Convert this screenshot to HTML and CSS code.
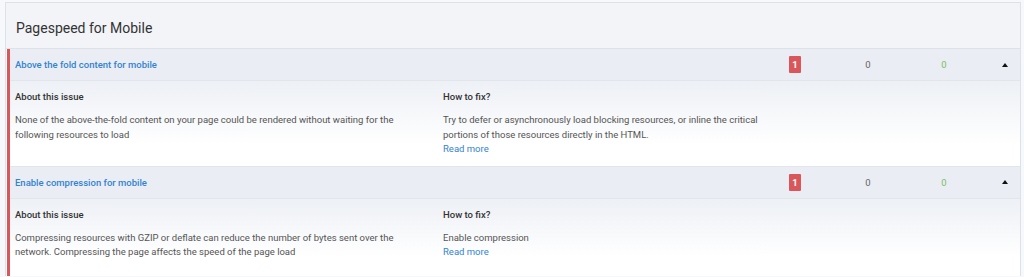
FILE: index.html
```html
<!DOCTYPE html>
<html lang="en">
    <head>
        <meta charset="UTF-8" />
        <meta name="viewport" content="width=device-width, initial-scale=1.0" />
        <title>Pagespeed for Mobile</title>
        <link rel="stylesheet" href="styles.css">
    </head>
    <body>
        <div class="panel">
            <div class="panel-head">
                <h2>Pagespeed for Mobile</h2>
            </div>
            <div class="issues">

                <div class="issue">
                    <div class="issue-head">
                        <a class="issue-name" href="#">Above the fold content for mobile</a>
                        <span class="cell"><span class="badge">1</span></span>
                        <span class="cell count">0</span>
                        <span class="cell count ok">0</span>
                        <span class="cell caret"></span>
                    </div>
                    <div class="issue-body">
                        <div class="col">
                            <h4>About this issue</h4>
                            <p>None of the above-the-fold content on your page could be rendered without waiting for the following resources to load</p>
                        </div>
                        <div class="col">
                            <h4>How to fix?</h4>
                            <p>Try to defer or asynchronously load blocking resources, or inline the critical portions of those resources directly in the HTML.</p>
                            <a class="more" href="#">Read more</a>
                        </div>
                    </div>
                </div>

                <div class="issue">
                    <div class="issue-head">
                        <a class="issue-name" href="#">Enable compression for mobile</a>
                        <span class="cell"><span class="badge">1</span></span>
                        <span class="cell count">0</span>
                        <span class="cell count ok">0</span>
                        <span class="cell caret"></span>
                    </div>
                    <div class="issue-body">
                        <div class="col">
                            <h4>About this issue</h4>
                            <p>Compressing resources with GZIP or deflate can reduce the number of bytes sent over the network. Compressing the page affects the speed of the page load</p>
                        </div>
                        <div class="col">
                            <h4>How to fix?</h4>
                            <p>Enable compression</p>
                            <a class="more" href="#">Read more</a>
                        </div>
                    </div>
                </div>

            </div>
        </div>
    </body>
</html>
```

FILE: styles.css
```css
body {
    margin: 0;
    background: #f7f8fb;
    font-family: Roboto, "Liberation Sans", sans-serif;
    color: #444;
}

.panel {
    margin: 2px 3px 0 5px;
    border: 1px solid #dde1e8;
    border-bottom: none;
    background: #fff;
}

.panel-head {
    height: 46px;
    display: flex;
    align-items: center;
    padding: 4px 0 0 10px;
    box-sizing: border-box;
    background: #f2f4f8;
    border-bottom: 1px solid #dde1e8;
}

.panel-head h2 {
    margin: 0;
    font-size: 14px;
    font-weight: 400;
    color: #333;
}

.issues {
    margin-left: 1px;
    border-left: 3px solid #d9575a;
}

.issue-head {
    display: grid;
    grid-template-columns: 1fr 86px 60px 92px 30px;
    align-items: center;
    height: 31px;
    padding-left: 5px;
    background: #eaedf3;
    border-bottom: 1px solid #e2e5ec;
}

.issue-name {
    font-size: 9.5px;
    font-weight: 500;
    color: #3383d1;
    text-decoration: none;
}

.cell {
    display: flex;
    justify-content: center;
    font-size: 9.5px;
}

.badge {
    width: 12px;
    height: 17px;
    display: flex;
    align-items: center;
    justify-content: center;
    border-radius: 1px;
    background: #d9575a;
    color: #fff;
    font-weight: 700;
}

.count {
    color: #666;
}

.count.ok {
    color: #7bbf5e;
}

.caret::before {
    content: "";
    border-left: 3.5px solid transparent;
    border-right: 3.5px solid transparent;
    border-bottom: 4px solid #111;
}

.issue-body {
    display: grid;
    grid-template-columns: 415px 330px;
    column-gap: 13px;
    padding: 10px 5px 9px 5px;
    background: linear-gradient(#edf0f5, #fff 75%);
    border-bottom: 1px solid #e2e5ec;
}

.issue:last-child .issue-body {
    padding-bottom: 16px;
    border-bottom: none;
}

.issue-body h4 {
    margin: 0 0 10px;
    font-size: 9.5px;
    font-weight: 500;
    line-height: 12px;
    color: #333;
}

.issue-body p {
    margin: 0;
    font-size: 9.5px;
    line-height: 14.5px;
    color: #555;
}

.more {
    display: block;
    font-size: 9.5px;
    line-height: 14.5px;
    color: #3383d1;
    text-decoration: none;
}
```
